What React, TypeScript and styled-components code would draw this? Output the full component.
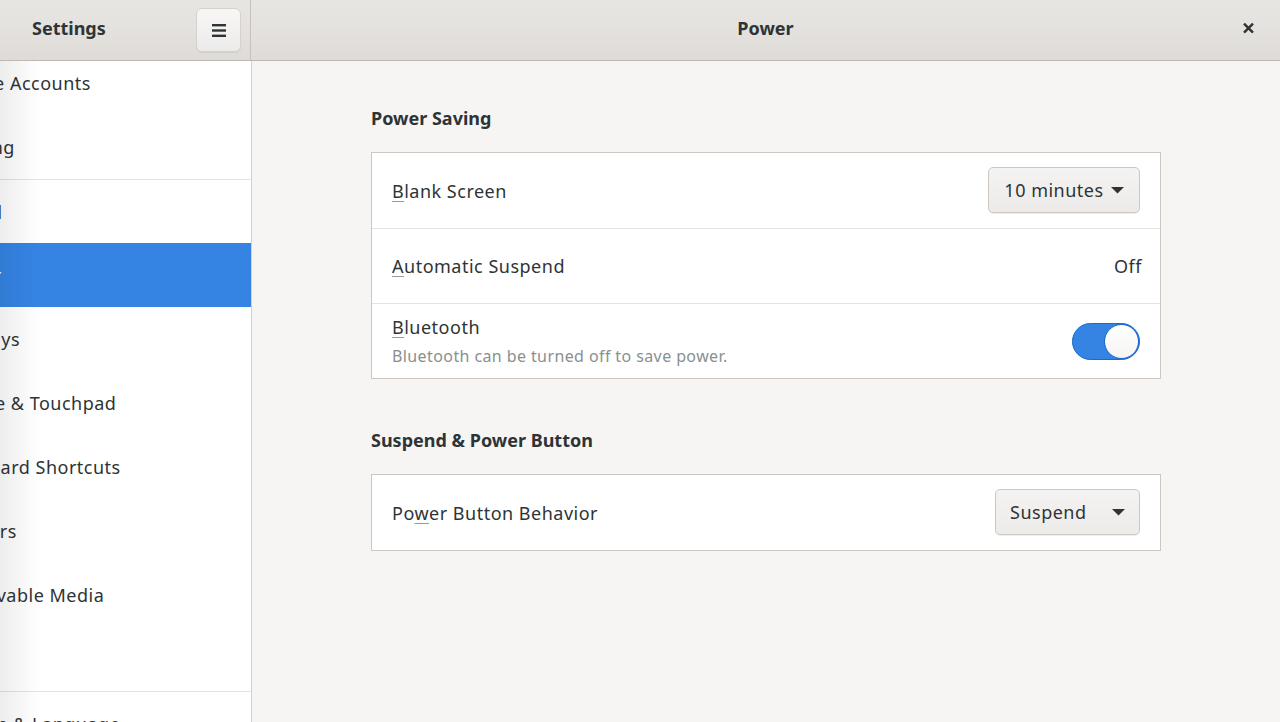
import styled, { createGlobalStyle } from "styled-components";

const GlobalStyle = createGlobalStyle`
    html, body {
        margin: 0;
        padding: 0;
        height: 100%;
    }
    body {
        font-family: "Noto Sans", "DejaVu Sans", sans-serif;
        color: #2e3436;
        background: #f6f5f4;
    }
`

const Window = styled.div`
    width: 1280px;
    height: 722px;
    display: flex;
    flex-direction: column;
    overflow: hidden;
`

const Titlebar = styled.header`
    display: flex;
    height: 60px;
    flex-shrink: 0;
    background: linear-gradient(to bottom, #e8e6e3, #dfdcd8);
    border-bottom: 1px solid #c0b9b2;
`

const SidebarHeader = styled.div`
    width: 251px;
    flex-shrink: 0;
    display: flex;
    align-items: center;
    justify-content: space-between;
    padding: 0 9px 0 32px;
    box-sizing: border-box;
    border-right: 1px solid #c7c1bb;
`

const Title = styled.h1`
    margin: 0 0 4px;
    font-size: 18px;
    font-weight: 700;
    color: #2e3436;
`

const MenuButton = styled.button`
    width: 45px;
    height: 44px;
    display: flex;
    align-items: center;
    justify-content: center;
    border: 1px solid #d6d1cc;
    border-radius: 6px;
    background: linear-gradient(to bottom, #f8f7f6, #edebe9);
    box-shadow: 0 1px 1px rgba(0, 0, 0, 0.06);
    padding: 0;
`

const MainHeader = styled.div`
    flex: 1;
    display: flex;
    align-items: center;
    justify-content: center;
    position: relative;
`

const CloseButton = styled.button`
    position: absolute;
    right: 20px;
    top: 50%;
    transform: translateY(-60%);
    width: 24px;
    height: 24px;
    border: none;
    background: transparent;
    display: flex;
    align-items: center;
    justify-content: center;
    padding: 0;
`

const Body = styled.div`
    flex: 1;
    display: flex;
    min-height: 0;
`

const Sidebar = styled.nav`
    width: 251px;
    flex-shrink: 0;
    background: #ffffff;
    border-right: 1px solid #d5d0cc;
    overflow: hidden;
    position: relative;

    &::after {
        content: "";
        position: absolute;
        inset: 0;
        pointer-events: none;
        background: linear-gradient(to right, rgba(0, 0, 0, 0.07), rgba(0, 0, 0, 0) 40px);
    }
`

const SideList = styled.ul`
    list-style: none;
    margin: -10px 0 0;
    padding: 0;
`

const SideItem = styled.li<{ $active?: boolean; $sep?: boolean }>`
    height: 64px;
    box-sizing: border-box;
    display: flex;
    align-items: center;
    white-space: nowrap;
    font-size: 18px;
    letter-spacing: 0.5px;
    color: ${p => p.$active ? "#ffffff" : "#2e3436"};
    background: ${p => p.$active ? "#3584e4" : "transparent"};
    border-top: ${p => p.$sep ? "1px solid #e4e2e0" : "none"};
`

const SideLabel = styled.span`
    margin-left: -54px;
`

const Content = styled.main`
    flex: 1;
    overflow: hidden;
    display: flex;
    justify-content: center;
    padding-top: 45px;
`

const Column = styled.div`
    width: 790px;
    display: flex;
    flex-direction: column;
`

const Heading = styled.h2`
    margin: 0 0 22px;
    font-size: 18px;
    line-height: 24px;
    font-weight: 700;
    color: #2e3436;
`

const Frame = styled.section`
    background: #ffffff;
    border: 1px solid #cdc7c2;
    margin-bottom: 49px;
`

const Row = styled.div`
    min-height: 75px;
    display: flex;
    align-items: center;
    justify-content: space-between;
    padding: 0 20px;
    box-sizing: border-box;

    & + & {
        border-top: 1px solid #e6e3e0;
    }
`

const RowText = styled.div`
    display: flex;
    flex-direction: column;
    gap: 6px;
`

const RowTitle = styled.span`
    font-size: 18px;
    letter-spacing: 0.5px;
    color: #2e3436;

    u {
        text-decoration-color: #9a9a9a;
        text-underline-offset: 3px;
    }
`

const RowSubtitle = styled.span`
    font-size: 16px;
    letter-spacing: 0.4px;
    color: #8a8f8f;
`

const Value = styled.span`
    font-size: 18px;
    letter-spacing: 0.5px;
    color: #2e3436;
    margin-right: -2px;
`

const Dropdown = styled.button<{ $width: number; $spread?: boolean }>`
    width: ${p => p.$width}px;
    height: 46px;
    margin-top: -2px;
    display: flex;
    align-items: center;
    justify-content: ${p => p.$spread ? "space-between" : "center"};
    gap: 7px;
    padding: 0 14px;
    box-sizing: border-box;
    white-space: nowrap;
    border: 1px solid #cdc7c2;
    border-radius: 5px;
    background: linear-gradient(to bottom, #f4f3f2, #edebe9);
    box-shadow: 0 1px 1px rgba(0, 0, 0, 0.07);
    font-family: inherit;
    font-size: 18px;
    letter-spacing: 0.5px;
    color: #2e3436;
`

const Switch = styled.div<{ $on: boolean }>`
    width: 68px;
    height: 37px;
    box-sizing: border-box;
    border-radius: 19px;
    border: 1px solid ${p => p.$on ? "#1b6acb" : "#cdc7c2"};
    background: ${p => p.$on ? "#3584e4" : "#e1dedb"};
    display: flex;
    align-items: center;
    justify-content: ${p => p.$on ? "flex-end" : "flex-start"};
`

const Knob = styled.span`
    width: 35px;
    height: 35px;
    box-sizing: border-box;
    border-radius: 50%;
    background: linear-gradient(to bottom, #ffffff, #f6f5f4);
    border: 1px solid #1b6acb;
`

const Arrow = () => (
    <svg width="13" height="8" viewBox="0 0 13 8" style={{ flexShrink: 0 }}>
        <path d="M0 1 L13 1 L6.5 7.5 Z" fill="#2e3436" />
    </svg>
)

const sections = [
    { label: "Online Accounts" },
    { label: "Sharing" },
    { label: "Sound", sep: true },
    { label: "Power", active: true },
    { label: "Displays" },
    { label: "Mouse & Touchpad" },
    { label: "Keyboard Shortcuts" },
    { label: "Printers" },
    { label: "Removable Media" },
    { label: "Color" },
    { label: "Region & Language", sep: true },
]

export default function App() {
    return (
        <Window>
            <GlobalStyle />
            <Titlebar>
                <SidebarHeader>
                    <Title>Settings</Title>
                    <MenuButton aria-label="Menu">
                        <svg width="14" height="13" viewBox="0 0 14 13">
                            <rect x="0" y="0" width="14" height="2.4" fill="#2e3436" />
                            <rect x="0" y="5.3" width="14" height="2.4" fill="#2e3436" />
                            <rect x="0" y="10.6" width="14" height="2.4" fill="#2e3436" />
                        </svg>
                    </MenuButton>
                </SidebarHeader>
                <MainHeader>
                    <Title>Power</Title>
                    <CloseButton aria-label="Close">
                        <svg width="11" height="11" viewBox="0 0 11 11">
                            <path d="M1 1 L10 10 M10 1 L1 10" stroke="#2e3436" strokeWidth="2.4" />
                        </svg>
                    </CloseButton>
                </MainHeader>
            </Titlebar>
            <Body>
                <Sidebar>
                    <SideList>
                        {sections.map(s => (
                            <SideItem key={s.label} $active={s.active} $sep={s.sep}>
                                <SideLabel>{s.label}</SideLabel>
                            </SideItem>
                        ))}
                    </SideList>
                </Sidebar>
                <Content>
                    <Column>
                        <Heading>Power Saving</Heading>
                        <Frame>
                            <Row>
                                <RowTitle><u>B</u>lank Screen</RowTitle>
                                <Dropdown $width={152}>
                                    10 minutes <Arrow />
                                </Dropdown>
                            </Row>
                            <Row>
                                <RowTitle><u>A</u>utomatic Suspend</RowTitle>
                                <Value>Off</Value>
                            </Row>
                            <Row>
                                <RowText>
                                    <RowTitle><u>B</u>luetooth</RowTitle>
                                    <RowSubtitle>Bluetooth can be turned off to save power.</RowSubtitle>
                                </RowText>
                                <Switch $on>
                                    <Knob />
                                </Switch>
                            </Row>
                        </Frame>
                        <Heading>Suspend &amp; Power Button</Heading>
                        <Frame>
                            <Row>
                                <RowTitle>Po<u>w</u>er Button Behavior</RowTitle>
                                <Dropdown $width={145} $spread>
                                    Suspend <Arrow />
                                </Dropdown>
                            </Row>
                        </Frame>
                    </Column>
                </Content>
            </Body>
        </Window>
    )
}
